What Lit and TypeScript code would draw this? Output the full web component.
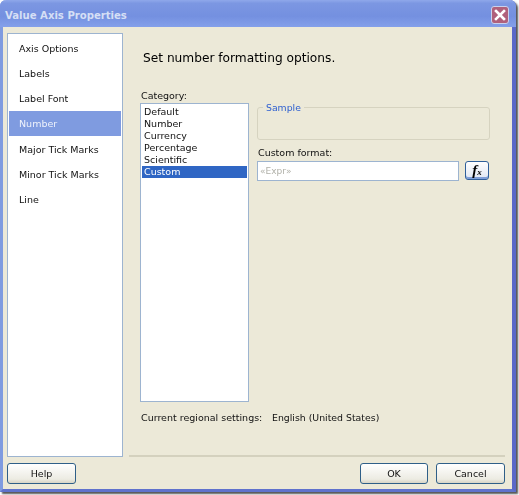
import { LitElement, html, css } from "lit";
import { customElement } from "lit/decorators.js";

@customElement("app-root")
export class AppRoot extends LitElement {
  static styles = css`
    :host { display: block; width: 519px; height: 495px; background: #fff; overflow: hidden;
      font-family: "DejaVu Sans", sans-serif; font-size: 9.5px; color: #111; }
    * { box-sizing: border-box; }
    .win { width: 516px; height: 492px; display: flex; flex-direction: column;
      background: #ece9d8; border-radius: 6px 6px 0 0;
      border-left: 3px solid #7f9be0; border-right: 4px solid #5a68c8; border-bottom: 3px solid #5f72cc;
      box-shadow: 2px 2px 2px #555; filter: blur(0.4px); }
    .title { height: 27px; flex: none; margin: 0 -4px 0 -3px; padding: 3px 7px 0 5px;
      display: flex; align-items: center; justify-content: space-between;
      background: linear-gradient(#8fa8ea 0, #7c97e2 12%, #7490e0 60%, #84a0ea 100%);
      border-radius: 6px 6px 0 0; color: #d5dff5; font-weight: 700; font-size: 10.1px; }
    .close { width: 18px; height: 18px; border-radius: 3px; background: #b0617c; border: 1px solid #c9d2ee;
      display: flex; align-items: center; justify-content: center; }
    .body { flex: 1; display: flex; min-height: 0; padding: 6px 7px 0 4px; gap: 6px; }
    .side { width: 116px; height: 424px; flex: none; background: #fff; border: 1px solid #9db4d0; padding: 1.8px 1px; }
    .side div { height: 25.17px; padding-left: 10px; display: flex; align-items: center; }
    .side .sel { background: #7f9be0; color: #eef2fb; }
    .main { flex: 1; min-width: 0; display: flex; flex-direction: column; }
    h1 { margin: 0; padding: 18px 0 0 14px; height: 57px; font-size: 12.2px; font-weight: 400; color: #000; }
    .cols { display: flex; padding-left: 11px; gap: 8px; }
    .cat { width: 109px; flex: none; }
    .lbl { height: 13px; line-height: 11px; padding-left: 1px; }
    .list { height: 299px; background: #fff; border: 1px solid #9db4d0; padding: 2px 1px; line-height: 12px; }
    .list div { height: 12px; padding-left: 2px; }
    .list .sel { background: #2f66c4; color: #fff; }
    .right { flex: 1; padding-top: 13px; }
    .group { position: relative; width: 233px; height: 33px; border: 1px solid #d6d3c0; border-radius: 3px; margin-bottom: 7px; margin-top: 4px; }
    .group span { position: absolute; left: 5px; top: -6px; background: #ece9d8; padding: 0 3px; color: #2d5fd0; line-height: 11px; font-size: 9.3px; }
    .fmt { height: 14px; line-height: 11px; padding-left: 1px; margin-top: 5px; }
    .row { display: flex; gap: 6px; }
    .input { width: 202px; height: 20px; background: #fff; border: 1px solid #9db4d0; color: #b0b0a8; padding: 0 2px; display: flex; align-items: center; font-size: 9px; }
    .fx { width: 24px; height: 19px; border: 1px solid #2f5f9a; border-radius: 3px; background: linear-gradient(#fff, #dfe6f2);
      box-shadow: inset 0 -2px 0 #7f9fd8; display: flex; align-items: baseline; justify-content: center; font-family: "Liberation Serif", serif; font-style: italic; font-weight: 700; font-size: 15px; color: #000; padding: 0; line-height: 16px; }
    .fx small { font-size: 9px; }
    .regional { display: flex; padding: 10px 0 0 12px; height: 53px; line-height: 11px; }
    .regional span:first-child { width: 131px; }
    .regional span:last-child { font-size: 9.35px; }
    .sep { height: 2px; background: #d4d1be; width: 376px; }
    .foot { flex: none; height: 32px; display: flex; justify-content: space-between; padding: 6px 7px 0 4px; }
    .btn { width: 69px; height: 21px; border: 1px solid #2f5f88; border-radius: 3px; background: linear-gradient(#fff, #ecebe2 80%, #d8d5c6);
      display: flex; align-items: center; justify-content: center; }
    .btn.ok { width: 68px; }
    .btns { display: flex; gap: 8px; }
  `;

  render() {
    const side = ["Axis Options", "Labels", "Label Font", "Number", "Major Tick Marks", "Minor Tick Marks", "Line"];
    const cats = ["Default", "Number", "Currency", "Percentage", "Scientific", "Custom"];
    return html`<div class="win">
      <div class="title">
        <span>Value Axis Properties</span>
        <div class="close"><svg width="12" height="12" viewBox="0 0 12 12"><path d="M2 2 L10 10 M10 2 L2 10" stroke="#fff" stroke-width="2.6" stroke-linecap="square"/></svg></div>
      </div>
      <div class="body">
        <div class="side">${side.map((s) => html`<div class=${s === "Number" ? "sel" : ""}>${s}</div>`)}</div>
        <div class="main">
          <h1>Set number formatting options.</h1>
          <div class="cols">
            <div class="cat">
              <div class="lbl">Category:</div>
              <div class="list">${cats.map((c) => html`<div class=${c === "Custom" ? "sel" : ""}>${c}</div>`)}</div>
            </div>
            <div class="right">
              <div class="group"><span>Sample</span></div>
              <div class="fmt">Custom format:</div>
              <div class="row"><div class="input">«Expr»</div><button class="fx">f<small>x</small></button></div>
            </div>
          </div>
          <div class="regional"><span>Current regional settings:</span><span>English (United States)</span></div>
          <div class="sep"></div>
        </div>
      </div>
      <div class="foot">
        <div class="btn">Help</div>
        <div class="btns"><div class="btn ok">OK</div><div class="btn">Cancel</div></div>
      </div>
    </div>`;
  }
}
